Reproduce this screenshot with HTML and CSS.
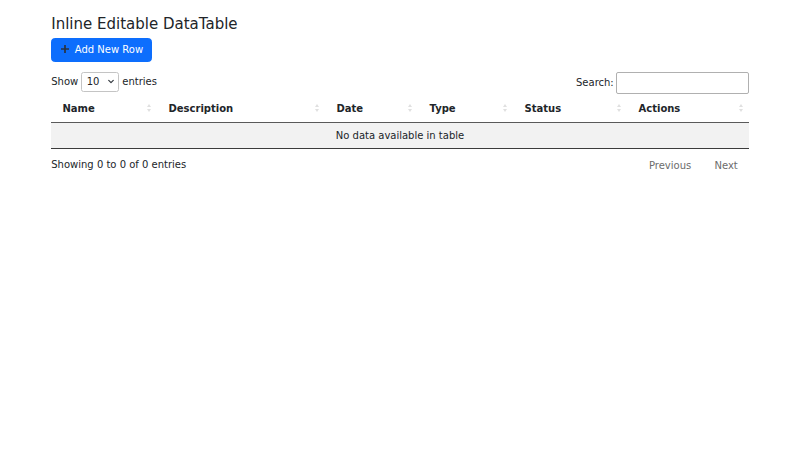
FILE: index.html
```html
<!DOCTYPE html>
<html lang="en">
<head>
<meta charset="utf-8">
<title>Inline Editable DataTable</title>
<link rel="stylesheet" href="styles.css">
</head>
<body>
<div class="container">
  <h4 class="title">Inline Editable DataTable</h4>
  <button class="btn-add" type="button">
    <svg class="plus" width="10" height="10" viewBox="0 0 10 10" aria-hidden="true"><path d="M5 1v8M1 5h8" stroke="#2b3340" stroke-width="1.7" stroke-linecap="butt" fill="none"/></svg>
    Add New Row
  </button>
  <div class="dt-wrapper">
    <div class="dt-top">
      <label class="dt-length">Show
        <select class="dt-select">
          <option>10</option>
          <option>25</option>
          <option>50</option>
          <option>100</option>
        </select>
        entries</label>
      <label class="dt-filter">Search:<input class="dt-search" type="search"></label>
    </div>
    <table class="dt-table">
      <thead>
        <tr>
          <th class="c-name">Name<span class="sort"></span></th>
          <th class="c-desc">Description<span class="sort"></span></th>
          <th class="c-date">Date<span class="sort"></span></th>
          <th class="c-type">Type<span class="sort"></span></th>
          <th class="c-status">Status<span class="sort"></span></th>
          <th class="c-actions">Actions<span class="sort"></span></th>
        </tr>
      </thead>
      <tbody>
        <tr class="odd">
          <td class="dt-empty" colspan="6">No data available in table</td>
        </tr>
      </tbody>
    </table>
    <div class="dt-bottom">
      <div class="dt-info">Showing 0 to 0 of 0 entries</div>
      <div class="dt-paginate">
        <a class="page-btn disabled">Previous</a>
        <a class="page-btn disabled">Next</a>
      </div>
    </div>
  </div>
</div>
</body>
</html>
```

FILE: styles.css
```css
* { box-sizing: border-box; }

html, body {
  margin: 0;
  padding: 0;
  background: #fff;
}

body {
  font-family: "DejaVu Sans", sans-serif;
  font-size: 10px;
  line-height: 15px;
  color: #212529;
}

.container {
  width: 697.5px;
  margin: 0 auto;
  padding-top: 15px;
}

.title {
  margin: 0 0 5px 0;
  font-size: 15px;
  line-height: 18px;
  font-weight: 500;
  color: #212529;
}

.btn-add {
  display: inline-flex;
  align-items: center;
  height: 23.75px;
  padding: 0 7.5px;
  margin: 0 0 10px 0;
  border: 0.625px solid #0d6efd;
  border-radius: 3.75px;
  background: #0d6efd;
  color: #fff;
  font-family: "DejaVu Sans", sans-serif;
  font-size: 10px;
  line-height: 15px;
  cursor: pointer;
}

.plus {
  width: 10px;
  height: 10px;
  margin-left: 0.5px;
  margin-right: 4.5px;
  margin-top: -1px;
}

.dt-top {
  display: flex;
  justify-content: space-between;
  align-items: flex-start;
}

.dt-length {
  display: flex;
  align-items: center;
  gap: 3px;
  height: 19.5px;
  margin-top: 0.25px;
}

.dt-select {
  -webkit-appearance: none;
  appearance: none;
  width: 38px;
  height: 19.5px;
  padding: 0 0 0 4.5px;
  border: 1px solid #c4c4c4;
  border-radius: 2.5px;
  background-color: #fff;
  background-image: url("data:image/svg+xml,%3Csvg xmlns='http://www.w3.org/2000/svg' viewBox='0 0 8 6'%3E%3Cpath d='M1 1.5l3 3 3-3' fill='none' stroke='%23343a40' stroke-width='1.6' stroke-linecap='round' stroke-linejoin='round'/%3E%3C/svg%3E");
  background-repeat: no-repeat;
  background-position: right 4px center;
  background-size: 6px 5px;
  color: #212529;
  font-family: "DejaVu Sans", sans-serif;
  font-size: 10px;
}

.dt-filter {
  display: flex;
  align-items: center;
}

.dt-search {
  width: 133px;
  height: 22px;
  margin-left: 2px;
  padding: 3px;
  border: 1px solid #b0b0b0;
  border-radius: 2px;
  font-family: "DejaVu Sans", sans-serif;
  font-size: 10px;
  background: #fff;
}

.dt-table {
  width: 100%;
  margin-top: 0.75px;
  border-collapse: collapse;
  table-layout: fixed;
  border-bottom: 1.5px solid #3c3c3c;
}

.dt-table th {
  position: relative;
  padding: 6.25px 11.25px;
  text-align: left;
  font-weight: bold;
  border-bottom: 1px solid #5a5a5a;
  color: #212529;
}

.c-name { width: 106px; }
.c-desc { width: 168px; }
.c-date { width: 93px; }
.c-type { width: 95px; }
.c-status { width: 114px; }

.sort {
  position: absolute;
  right: 5px;
  top: 50%;
  margin-top: -4px;
  width: 5px;
  height: 8px;
}

.sort::before,
.sort::after {
  content: "";
  position: absolute;
  left: 0;
  width: 0;
  height: 0;
  border-left: 2.5px solid transparent;
  border-right: 2.5px solid transparent;
}

.sort::before {
  top: 0;
  border-bottom: 3px solid #e0e0e0;
}

.sort::after {
  bottom: 0;
  border-top: 3px solid #e0e0e0;
}

.dt-table td {
  padding: 5px 6.25px;
}

.dt-table tr.odd td {
  background: #f2f2f2;
}

.dt-empty {
  text-align: center;
}

.dt-bottom {
  display: flex;
  justify-content: space-between;
  align-items: flex-start;
}

.dt-info {
  padding-top: 7.5px;
}

.dt-paginate {
  display: flex;
  padding-top: 2.5px;
}

.page-btn {
  display: block;
  padding: 5px 10px;
  margin-left: 1.25px;
  border: 0.625px solid transparent;
  color: #6c6c6c;
  text-decoration: none;
  cursor: default;
}
```
